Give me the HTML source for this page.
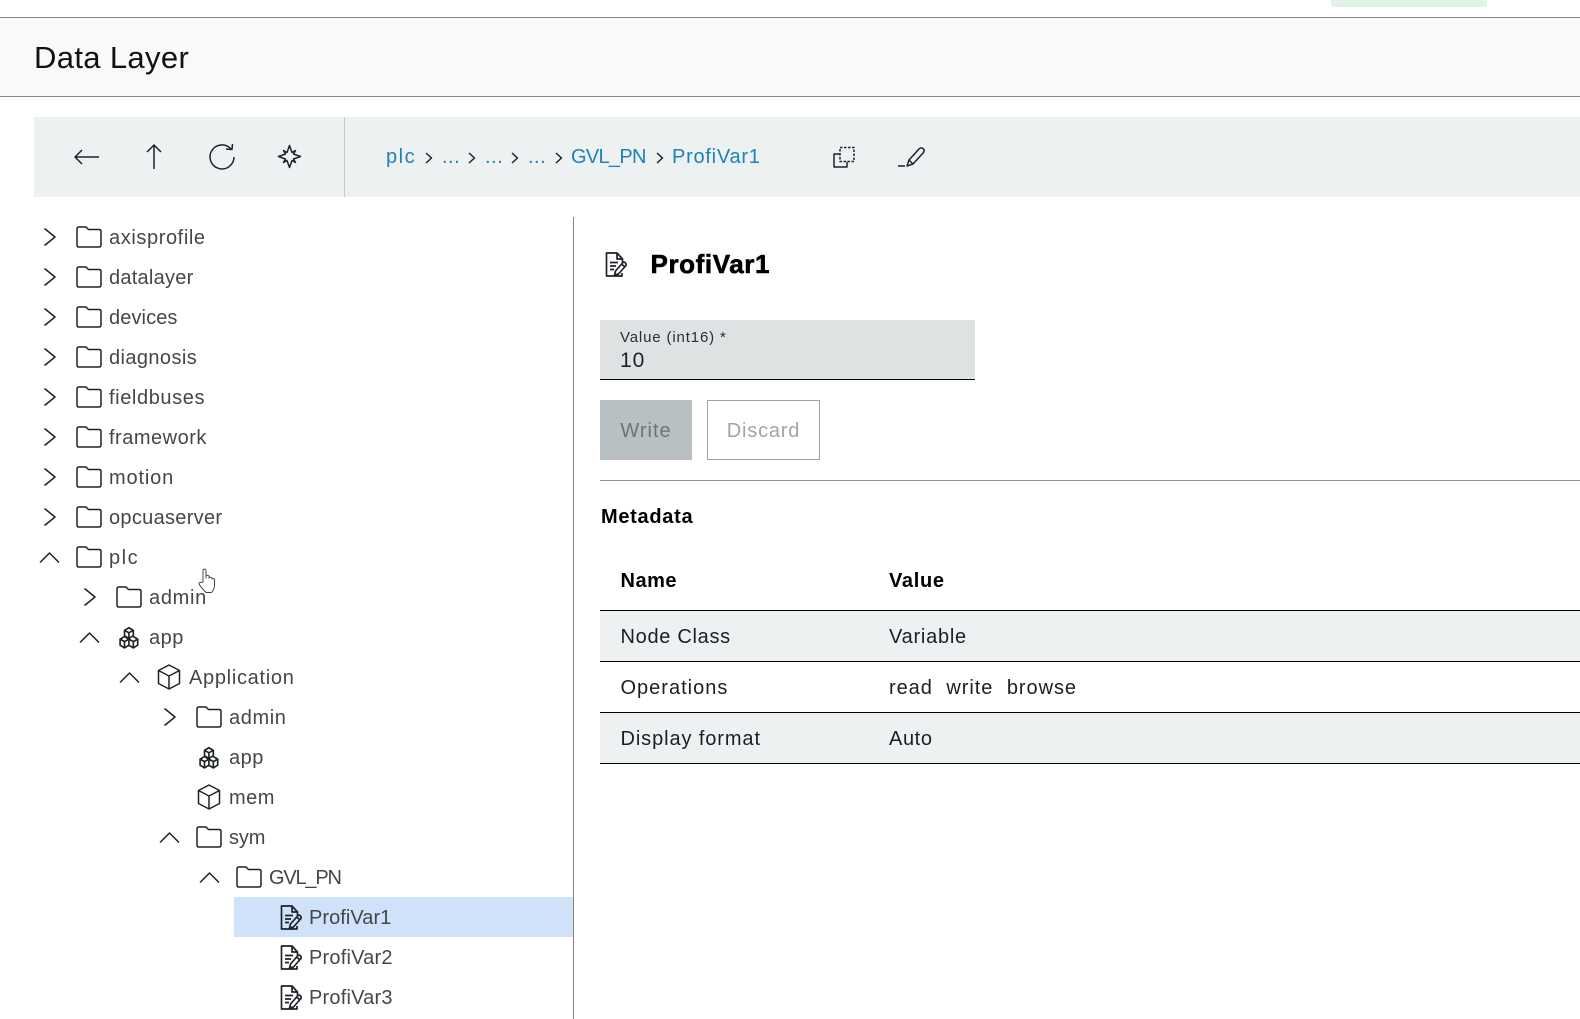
<!DOCTYPE html>
<html lang="en">
<head>
<meta charset="utf-8">
<title>Data Layer</title>
<style>
html,body{margin:0;padding:0;background:#fff}
#p{position:relative;width:1580px;height:1019px;overflow:hidden;background:#fff;font-family:"Liberation Sans",sans-serif;font-size:20px;letter-spacing:.5px;color:#000}
#p div,#p svg{position:absolute}
.t{height:28px;line-height:28px;white-space:nowrap;color:#43474b}
.d{color:#1b1f22}
.c{color:#1d82b8}
svg{overflow:visible}
svg *{fill:none;stroke:#1e2327;stroke-width:1.5;stroke-linejoin:round}
.b{font-weight:bold;color:#000}
</style>
</head>
<body>
<div id="p">
<svg width="0" height="0" style="position:absolute">
<defs>
<g id="r"><path d="M1.500 3.500L12 12 1.500 20.500"/></g>
<g id="u"><path d="M1 10.500L10.500 1 20 10.500"/></g>
<g id="f"><path d="M1 3q0-2 2-2h7l2.500 2.500H23q2 0 2 2V19q0 2-2 2H3q-2 0-2-2z"/></g>
<g id="a"><g transform="scale(1.1)"><path d="M9 .7l4 2.300v5L9 10.300 5 8V3zM5 3l4 2.300L13 3M9 5.300v5M5 8.700l4 2.300v5.500L5 19 1 16.500V11zM1 11l4 2.300L9 11M5 13.300V19M13 8.700l4 2.300v5.500L13 19l-4-2.500M13 13.300l4-2.300M13 13.300V19M9 11l4 2.300"/></g></g>
<g id="b"><path d="M12 1l10.500 5.500v13L12 25 1.500 19.500v-13zM1.500 6.500L12 12 22.500 6.500M12 12v13"/></g>
<g id="v"><path style="stroke-width:1.700" d="M12 1H1.500v23H17v-3M12 1l5.500 6H12zM17.500 7v4M5 10.500h8M5 14h6M5 17.500h4M9.500 23l1-4 7.500-8.500q1.500-1 2.500.5t.5 2.500l-7.500 8.500zM16.500 12l3.500 3"/></g>
</defs>
</svg>

<div style="left:1331px;top:0;width:156px;height:7px;background:#dff4e7;border-radius:0 0 3px 3px"></div>
<div style="left:0;top:17px;width:1580px;height:80px;background:#f9f9f9"></div>
<div style="left:0;top:17px;width:1580px;height:1px;background:#888"></div>
<div style="left:0;top:96px;width:1580px;height:1px;background:#888"></div>
<div class="t" style="left:34px;top:39px;height:38px;line-height:38px;font-size:31px;letter-spacing:.35px;color:#111">Data Layer</div>

<div style="left:34px;top:117px;width:1546px;height:80px;background:#eef1f1"></div>
<div style="left:344px;top:117px;width:1px;height:80px;background:#c6cbcc"></div>
<svg style="left:74px;top:145px" width="26" height="24"><path d="M25 12H1M8 5l-7 7 7 7"/></svg>
<svg style="left:142px;top:144px" width="24" height="26"><path d="M12 25V1M5 8l7-7 7 7"/></svg>
<svg style="left:209px;top:143px" width="26" height="28"><path d="M22 6A12 12 0 1 0 25 14M23.500 1L23 6.500L17 6"/></svg>
<svg style="left:278px;top:145px" width="23" height="23"><path d="M11.500.5L14 7.500l3.500-2-2 3.500 7 2.500-7 2.500 2 3.500-3.500-2-2.500 7-2.500-7-3.500 2 2-3.500-7-2.500 7-2.500-2-3.500 3.500 2z"/></svg>

<div class="t c" style="left:386px;top:143px;letter-spacing:1.5px">plc</div>
<svg style="left:425px;top:152px" width="8" height="12"><path d="M1 1l5.500 5L1 11"/></svg>
<div class="t c" style="left:442px;top:143px">...</div>
<svg style="left:468px;top:152px" width="8" height="12"><path d="M1 1l5.500 5L1 11"/></svg>
<div class="t c" style="left:485px;top:143px">...</div>
<svg style="left:511px;top:152px" width="8" height="12"><path d="M1 1l5.500 5L1 11"/></svg>
<div class="t c" style="left:528px;top:143px">...</div>
<svg style="left:555px;top:152px" width="8" height="12"><path d="M1 1l5.500 5L1 11"/></svg>
<div class="t c" style="left:571px;top:143px;letter-spacing:-.7px">GVL_PN</div>
<svg style="left:656px;top:152px" width="8" height="12"><path d="M1 1l5.500 5L1 11"/></svg>
<div class="t c" style="left:672px;top:143px;letter-spacing:.75px">ProfiVar1</div>
<svg style="left:833px;top:146px" width="24" height="24"><path d="M7 8H1v13h13v-5"/><path stroke-dasharray="2.500 1.500" d="M7 1.500h14v14H7z"/></svg>
<svg style="left:897px;top:146px" width="30" height="22"><path d="M1 20h7M10 20l2-6L22 3q2-2 4-.5t.5 4L16 18zM12 14l4 4"/></svg>

<svg style="left:43px;top:225px" width="14" height="24"><use href="#r"/></svg>
<svg style="left:76px;top:226px" width="26" height="24"><use href="#f"/></svg>
<div class="t" style="left:109px;top:224px;letter-spacing:.6px">axisprofile</div>
<svg style="left:43px;top:265px" width="14" height="24"><use href="#r"/></svg>
<svg style="left:76px;top:266px" width="26" height="24"><use href="#f"/></svg>
<div class="t" style="left:109px;top:264px;letter-spacing:.25px">datalayer</div>
<svg style="left:43px;top:305px" width="14" height="24"><use href="#r"/></svg>
<svg style="left:76px;top:306px" width="26" height="24"><use href="#f"/></svg>
<div class="t" style="left:109px;top:304px;letter-spacing:.1px">devices</div>
<svg style="left:43px;top:345px" width="14" height="24"><use href="#r"/></svg>
<svg style="left:76px;top:346px" width="26" height="24"><use href="#f"/></svg>
<div class="t" style="left:109px;top:344px;letter-spacing:.4px">diagnosis</div>
<svg style="left:43px;top:385px" width="14" height="24"><use href="#r"/></svg>
<svg style="left:76px;top:386px" width="26" height="24"><use href="#f"/></svg>
<div class="t" style="left:109px;top:384px;letter-spacing:.6px">fieldbuses</div>
<svg style="left:43px;top:425px" width="14" height="24"><use href="#r"/></svg>
<svg style="left:76px;top:426px" width="26" height="24"><use href="#f"/></svg>
<div class="t" style="left:109px;top:424px">framework</div>
<svg style="left:43px;top:465px" width="14" height="24"><use href="#r"/></svg>
<svg style="left:76px;top:466px" width="26" height="24"><use href="#f"/></svg>
<div class="t" style="left:109px;top:464px;letter-spacing:.85px">motion</div>
<svg style="left:43px;top:505px" width="14" height="24"><use href="#r"/></svg>
<svg style="left:76px;top:506px" width="26" height="24"><use href="#f"/></svg>
<div class="t" style="left:109px;top:504px;letter-spacing:.3px">opcuaserver</div>
<svg style="left:39px;top:552px" width="21" height="12"><use href="#u"/></svg>
<svg style="left:76px;top:546px" width="26" height="24"><use href="#f"/></svg>
<div class="t" style="left:109px;top:544px;letter-spacing:1.5px">plc</div>
<svg style="left:83px;top:585px" width="14" height="24"><use href="#r"/></svg>
<svg style="left:116px;top:586px" width="26" height="24"><use href="#f"/></svg>
<div class="t" style="left:149px;top:584px;letter-spacing:.7px">admin</div>
<svg style="left:79px;top:632px" width="21" height="12"><use href="#u"/></svg>
<svg style="left:119px;top:627px" width="20" height="22"><use href="#a"/></svg>
<div class="t" style="left:149px;top:624px">app</div>
<svg style="left:119px;top:672px" width="21" height="12"><use href="#u"/></svg>
<svg style="left:157px;top:664px" width="24" height="26"><use href="#b"/></svg>
<div class="t" style="left:189px;top:664px;letter-spacing:.7px">Application</div>
<svg style="left:163px;top:705px" width="14" height="24"><use href="#r"/></svg>
<svg style="left:196px;top:706px" width="26" height="24"><use href="#f"/></svg>
<div class="t" style="left:229px;top:704px;letter-spacing:.6px">admin</div>
<svg style="left:199px;top:747px" width="20" height="22"><use href="#a"/></svg>
<div class="t" style="left:229px;top:744px">app</div>
<svg style="left:197px;top:784px" width="24" height="26"><use href="#b"/></svg>
<div class="t" style="left:229px;top:784px">mem</div>
<svg style="left:159px;top:832px" width="21" height="12"><use href="#u"/></svg>
<svg style="left:196px;top:826px" width="26" height="24"><use href="#f"/></svg>
<div class="t" style="left:229px;top:824px;letter-spacing:-.1px">sym</div>
<svg style="left:199px;top:872px" width="21" height="12"><use href="#u"/></svg>
<svg style="left:236px;top:866px" width="26" height="24"><use href="#f"/></svg>
<div class="t" style="left:269px;top:864px;letter-spacing:-1.2px">GVL_PN</div>
<div style="left:234px;top:897px;width:339px;height:40px;background:#cfe2fa"></div>
<svg style="left:280px;top:905px" width="24" height="26"><use href="#v"/></svg>
<div class="t" style="left:309px;top:904px;letter-spacing:.05px">ProfiVar1</div>
<svg style="left:280px;top:945px" width="24" height="26"><use href="#v"/></svg>
<div class="t" style="left:309px;top:944px;letter-spacing:.2px">ProfiVar2</div>
<svg style="left:280px;top:985px" width="24" height="26"><use href="#v"/></svg>
<div class="t" style="left:309px;top:984px;letter-spacing:.2px">ProfiVar3</div>

<svg style="left:197px;top:567px" width="20" height="28"><path style="fill:#fff;stroke:#444;stroke-width:1" d="M6 15V3q1.500-2 3 0v8V9q1.500-1.500 3 0v2q1.500-1.500 3 0v1q1.500-1 2.500.5V19q-.5 4-3 6.500H9L4 20l-2-3q0-2 2-1.500z"/></svg>

<div style="left:573px;top:217px;width:1px;height:802px;background:#7d8389"></div>

<svg style="left:605px;top:252px" width="24" height="26"><use href="#v"/></svg>
<div class="t b" style="left:650.500px;top:250px;font-size:26px;letter-spacing:.6px;-webkit-text-stroke:.6px #000">ProfiVar1</div>

<div style="left:600px;top:320px;width:375px;height:59px;background:#dfe2e3"></div>
<div style="left:600px;top:379px;width:375px;height:1px;background:#000"></div>
<div class="t" style="left:620px;top:324px;font-size:15px;color:#2a2e32;letter-spacing:.85px">Value (int16) *</div>
<div class="t" style="left:620px;top:347px;font-size:21px;color:#1e2226;letter-spacing:1px">10</div>

<div style="left:600px;top:400px;width:92px;height:60px;background:#b9c0c4"></div>
<div class="t" style="left:600px;top:417px;width:92px;text-align:center;color:#6d7377;letter-spacing:1px">Write</div>
<div style="left:707px;top:400px;width:111px;height:58px;border:1px solid #a0a4a8"></div>
<div class="t" style="left:707px;top:417px;width:113px;text-align:center;color:#a0a5a8;letter-spacing:.8px">Discard</div>
<div style="left:600px;top:480px;width:980px;height:1px;background:#8f9296"></div>
<div class="t b" style="left:601px;top:503px;letter-spacing:.7px">Metadata</div>

<div class="t b" style="left:620.500px;top:567px;letter-spacing:.5px">Name</div>
<div class="t b" style="left:889px;top:567px;letter-spacing:.7px">Value</div>
<div style="left:600px;top:610px;width:980px;height:1px;background:#000"></div>
<div style="left:600px;top:611px;width:980px;height:50px;background:#eef1f1"></div>
<div style="left:600px;top:661px;width:980px;height:1px;background:#000"></div>
<div style="left:600px;top:712px;width:980px;height:1px;background:#000"></div>
<div style="left:600px;top:713px;width:980px;height:50px;background:#eef1f1"></div>
<div style="left:600px;top:763px;width:980px;height:1px;background:#000"></div>
<div class="t d" style="left:620.500px;top:623px;letter-spacing:.7px">Node Class</div>
<div class="t d" style="left:889px;top:623px;letter-spacing:.75px">Variable</div>
<div class="t d" style="left:620.500px;top:674px;letter-spacing:1px">Operations</div>
<div class="t d" style="left:889px;top:674px;letter-spacing:.95px;word-spacing:7px">read write browse</div>
<div class="t d" style="left:620.500px;top:725px;letter-spacing:.9px">Display format</div>
<div class="t d" style="left:889px;top:725px;letter-spacing:.6px">Auto</div>
</div>
</body>
</html>
